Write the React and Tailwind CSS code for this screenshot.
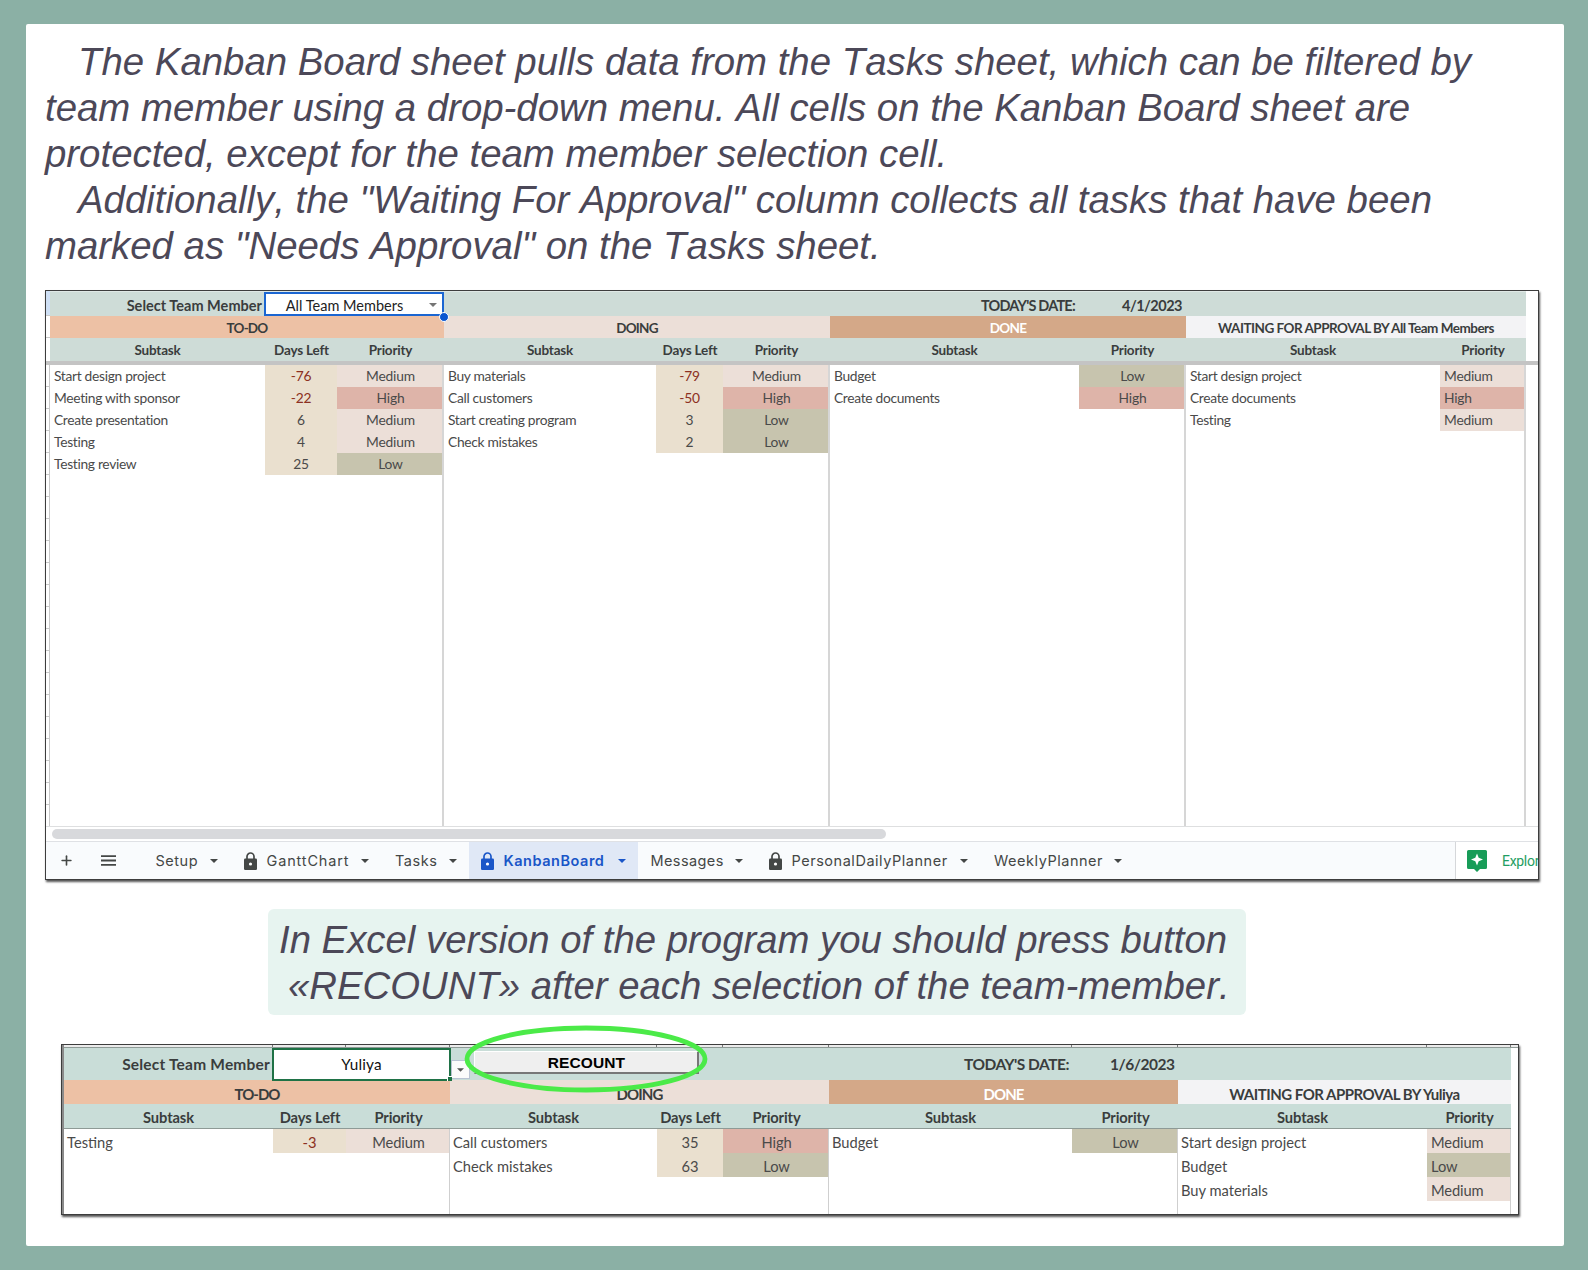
import { Plus } from "lucide-react";

const PRIORITY_COLOURS = {
  Low: "bg-[#c7c4ae]",
  Medium: "bg-[#ecdfd8]",
  High: "bg-[#deb4a9]",
};

const SHEETS_COLUMNS = [
  {
    title: "TO-DO",
    width: "w-[394px]",
    grid: "grid-cols-[215px_72px_105px]",
    titleColour: "bg-[#edc1a5]",
    titleSpacing: "tracking-[-0.8px]",
    hasDays: true,
    tasks: [
      ["Start design project", -76, "Medium"],
      ["Meeting with sponsor", -22, "High"],
      ["Create presentation", 6, "Medium"],
      ["Testing", 4, "Medium"],
      ["Testing review", 25, "Low"],
    ],
  },
  {
    title: "DOING",
    width: "w-[386px]",
    grid: "grid-cols-[212px_67px_105px]",
    titleColour: "bg-[#ecdfd8]",
    titleSpacing: "tracking-[-0.8px]",
    hasDays: true,
    tasks: [
      ["Buy materials", -79, "Medium"],
      ["Call customers", -50, "High"],
      ["Start creating program", 3, "Low"],
      ["Check mistakes", 2, "Low"],
    ],
  },
  {
    title: "DONE",
    width: "w-[356px]",
    grid: "grid-cols-[249px_105px]",
    titleColour: "bg-[#d4a888] text-white",
    titleSpacing: "tracking-[-0.7px]",
    tasks: [
      ["Budget", null, "Low"],
      ["Create documents", null, "High"],
    ],
  },
  {
    title: "WAITING FOR APPROVAL BY All Team Members",
    width: "w-[340px]",
    grid: "grid-cols-[254px_84px]",
    titleColour: "bg-[#f3f3f5]",
    titleSpacing: "tracking-[-0.5px]",
    alignLeft: true,
    tasks: [
      ["Start design project", null, "Medium"],
      ["Create documents", null, "High"],
      ["Testing", null, "Medium"],
    ],
  },
];

const EXCEL_COLUMNS = [
  {
    title: "TO-DO",
    width: "w-[386px]",
    grid: "grid-cols-[209px_73px_103px]",
    titleColour: "bg-[#edc1a5]",
    titleSpacing: "tracking-[-1px]",
    hasDays: true,
    tasks: [["Testing", -3, "Medium"]],
  },
  {
    title: "DOING",
    width: "w-[379px]",
    grid: "grid-cols-[207px_66px_105px]",
    titleColour: "bg-[#ecdfd8]",
    titleSpacing: "tracking-[-0.9px]",
    hasDays: true,
    tasks: [
      ["Call customers", 35, "High"],
      ["Check mistakes", 63, "Low"],
    ],
  },
  {
    title: "DONE",
    width: "w-[349px]",
    grid: "grid-cols-[243px_105px]",
    titleColour: "bg-[#d4a888] text-white",
    titleSpacing: "tracking-[-0.9px]",
    tasks: [["Budget", null, "Low"]],
  },
  {
    title: "WAITING FOR APPROVAL BY Yuliya",
    width: "w-[333px]",
    grid: "grid-cols-[249px_83px]",
    titleColour: "bg-[#f3f3f5]",
    titleSpacing: "tracking-[-0.5px]",
    alignLeft: true,
    tasks: [
      ["Start design project", null, "Medium"],
      ["Budget", null, "Low"],
      ["Buy materials", null, "Medium"],
    ],
  },
];

const TABS = [
  { name: "Setup", style: "w-[87px] pl-[12.5px]" },
  { name: "GanttChart", style: "w-[151px] pl-[13.5px] tracking-[0.85px]", locked: true },
  { name: "Tasks", style: "w-[88px] pl-[14px]" },
  { name: "KanbanBoard", style: "w-[169px] pl-[11.5px]", locked: true, active: true },
  { name: "Messages", style: "w-[117px] pl-[12.5px] tracking-[0.4px]" },
  { name: "PersonalDailyPlanner", style: "w-[225px] pl-[13.5px]", locked: true },
  { name: "WeeklyPlanner", style: "w-[154px] pl-[14px]" },
];

const LockIcon = () => (
  <svg className="mr-[10px] h-[18px] w-[13px] shrink-0" viewBox="0 0 13 18">
    <path d="M3 7V4.5a3.5 3.5 0 0 1 7 0V7" fill="none" stroke="currentColor" strokeWidth="1.7" />
    <rect x="0" y="6.5" width="13" height="11.5" rx="1.2" fill="currentColor" />
    <circle cx="6.5" cy="12" r="1.6" fill="#fff" />
  </svg>
);

const Caret = ({ className }) => (
  <svg className={className} viewBox="0 0 8 4">
    <path d="M0 0h8L4 4z" fill="currentColor" />
  </svg>
);

const SheetListIcon = () => (
  <svg className="ml-[27px] h-[11px] w-[15px]" viewBox="0 0 15 11">
    <path d="M0 1.2h15M0 5.5h15M0 9.8h15" stroke="currentColor" strokeWidth="1.8" />
  </svg>
);

const ExploreIcon = () => (
  <svg className="h-[22px] w-[20px] shrink-0" viewBox="0 0 20 22">
    <path
      d="M1.5 0h17A1.5 1.5 0 0 1 20 1.5v16a1.5 1.5 0 0 1-1.5 1.5H13l-3 3-3-3H1.5A1.5 1.5 0 0 1 0 17.5v-16A1.5 1.5 0 0 1 1.5 0z"
      fill="#189c58"
    />
    <path d="M10 3.5l1.7 4.3L16 9.5l-4.3 1.7L10 15.5l-1.7-4.3L4 9.5l4.3-1.7z" fill="#fff" />
  </svg>
);

const Column = ({ column, sizes }) => {
  const { title, width, grid, titleColour, titleSpacing, hasDays, alignLeft, tasks } = column;
  return (
    <div className={`flex shrink-0 flex-col ${width}`}>
      <div className={`flex items-center justify-center font-bold whitespace-nowrap ${sizes.title} ${titleColour} ${titleSpacing}`}>
        {title}
      </div>
      <div className={`grid items-center text-center font-bold whitespace-nowrap ${sizes.head} ${grid}`}>
        <span>Subtask</span>
        {hasDays && <span className="pl-px">Days Left</span>}
        <span className="pl-[2px]">Priority</span>
      </div>
      <div className={`flex-1 ${sizes.line}`}>
        {tasks.map(([name, days, priority], index) => (
          <div className={`grid text-center text-[#4a4a4a] ${grid} ${sizes.row}`} key={index}>
            <span className={`text-left ${sizes.name}`}>{name}</span>
            {hasDays && (
              <span className={`bg-[#eae0cf] ${sizes.cell} ${days < 0 ? "text-[#8c3022]" : ""}`}>{days}</span>
            )}
            <span className={`${PRIORITY_COLOURS[priority]} ${sizes.cell} ${alignLeft ? "pl-1 text-left" : "pl-[2px]"}`}>
              {priority}
            </span>
          </div>
        ))}
      </div>
    </div>
  );
};

const SheetsBoard = () => {
  const sizes = {
    title: "h-[22px] pt-[2px] text-[13.5px]",
    head: "h-[27px] border-b-4 border-[#c4c4c4] bg-[#cedcd7] pt-[2px] text-[13.5px]",
    line: "border-r-2 border-[#d6d6d6]",
    row: "h-[22px] leading-[22px]",
    name: "pl-[4px] tracking-[-0.31px]",
    cell: "",
  };
  return (
    <div className="ml-[19px] flex h-[590px] w-[1494px] flex-col overflow-hidden border border-[#3d3d3d] bg-white shadow-[1px_2px_2px_#555] font-[Lato,sans-serif] text-[13.8px] tracking-[-0.2px] text-[#3a3d3d]">
      <div className="flex h-[535px] shrink-0">
        <div className="flex w-[4px] shrink-0 flex-col bg-white">
          <div className="h-[25px] shrink-0 border-b border-[#c9c9c9] bg-[#cfe0f5]" />
          <div className="h-[22px] shrink-0 border-b border-[#c9c9c9]" />
          <div className="h-[27px] shrink-0 border-b-4 border-[#c4c4c4]" />
          {Array.from({ length: 21 }, (_, i) => (
            <div className="h-[22px] shrink-0 border-r border-b border-[#c9c9c9]" key={i} />
          ))}
        </div>
        <div className="flex w-[1476px] shrink-0 flex-col">
          <div className="flex h-[25px] shrink-0 items-stretch border-t border-[#dfe8e5] bg-[#cedcd7] text-[14.5px] leading-[27px] tracking-[0.02px] whitespace-nowrap">
            <div className="w-[212px] text-right font-bold">Select Team Member</div>
            <div className="relative ml-[2px] flex w-[180px] items-center justify-center border-2 border-[#1b66d2] bg-white pt-[2px] pr-[19px] text-[#222]">
              All Team Members
              <Caret className="absolute top-[9px] right-[5px] h-[4px] w-[8px] text-[#757575]" />
              <span className="absolute -right-[7px] -bottom-[8px] size-[10px] rounded-full border border-white bg-[#0b57d0]" />
            </div>
            <div className="ml-[537px] w-[95px] font-bold tracking-[-0.8px]">TODAY'S DATE:</div>
            <div className="ml-[46px] w-[62px] font-bold tracking-[-0.5px]">4/1/2023</div>
          </div>
          <div className="flex flex-1">
            {SHEETS_COLUMNS.map((column) => (
              <Column column={column} sizes={sizes} key={column.title} />
            ))}
          </div>
        </div>
        <div className="flex-1">
          <div className="h-[74px] border-b-4 border-[#c4c4c4]" />
        </div>
      </div>
      <div className="flex h-[15px] shrink-0 items-center border-t border-[#dedfe0] pl-[6px]">
        <div className="h-[10px] w-[834px] rounded-full bg-[#d8d9dc]" />
      </div>
      <div className="flex flex-1 items-stretch border-t border-[#dfe1e5] bg-[#f9fbfd] font-[Inter,sans-serif] text-[14.5px] tracking-[0.53px] text-[#444746]">
        <div className="flex w-[97px] items-center pl-[13px]">
          <Plus size={15} strokeWidth={2.6} />
          <SheetListIcon />
        </div>
        {TABS.map(({ name, style, locked, active }) => (
          <div
            className={`flex shrink-0 items-center pt-px pr-[12px] ${style} ${
              active ? "bg-[#e0e8f6] font-semibold text-[#1a56c8]" : ""
            }`}
            key={name}>
            {locked && <LockIcon />}
            {name}
            <Caret className="ml-auto h-[4px] w-[8px]" />
          </div>
        ))}
        <div className="ml-auto flex w-[83px] shrink-0 items-center overflow-hidden border-l border-[#d5d7da] bg-white pl-[11px] font-[Roboto,sans-serif] text-[14px] tracking-[-0.3px] text-[#1f9e63]">
          <ExploreIcon />
          <span className="mt-px ml-[15px]">Explore</span>
        </div>
      </div>
    </div>
  );
};

const ExcelBoard = () => {
  const sizes = {
    title: "h-[24px] pt-[4px] text-[15px]",
    head: "h-[25px] border-b border-[#8e9a96] bg-[#c9ddd8] pt-[2px] text-[14.7px] leading-[22px]",
    line: "border-r border-[#cfcfcf]",
    row: "h-[24px] leading-[22px]",
    name: "pt-[2px] pl-[3px] tracking-[0px]",
    cell: "pt-[2px]",
  };
  return (
    <div className="relative mt-[29px] ml-[35px] h-[171px] w-[1458px] border border-[#3d3d3d] bg-white shadow-[1px_2px_2px_#555] font-[Lato,sans-serif] text-[14.7px] tracking-[-0.1px] text-[#3a3d3d]">
      <div className="flex h-full flex-col overflow-hidden border-l-2 border-[#8a8a8a]">
        <div className="flex h-[3px] shrink-0 border-b border-[#8e9a96] bg-[#ececec]">
          <div className="w-[209px] border-r border-[#777]" />
          <div className="w-[73px] border-r border-[#777]" />
          <div className="w-[104px] border-r border-[#777]" />
          <div className="w-[207px] border-r border-[#777]" />
          <div className="w-[66px] border-r border-[#777]" />
          <div className="w-[106px] border-r border-[#777]" />
          <div className="w-[243px] border-r border-[#777]" />
          <div className="w-[106px] border-r border-[#777]" />
          <div className="w-[249px] border-r border-[#777]" />
          <div className="w-[84px] border-r border-[#777]" />
        </div>
        <div className="flex h-[32px] w-[1447px] shrink-0 bg-[#c9ddd8] text-[15.5px] leading-[33px] tracking-[0.2px] whitespace-nowrap">
          <div className="w-[206px] text-right font-bold">Select Team Member</div>
          <div className="relative ml-[2px] flex h-[33px] w-[179px] items-center justify-center border-2 border-[#1f7246] bg-white pb-px text-[15.3px] text-[#111]">
            Yuliya
            <span className="absolute -right-[3px] -bottom-[2px] size-[5px] border-t border-l border-white bg-[#1f7246]" />
          </div>
          <div className="mt-[12px] flex h-[19px] w-[19px] items-center justify-center border border-[#b9c3d3] bg-[#fbfbfb]">
            <Caret className="h-[4px] w-[7px] text-[#555]" />
          </div>
          <button className="mt-[3px] ml-[4px] h-[23px] w-[225px] border-t border-r-2 border-b-2 border-l border-t-white border-r-[#777] border-b-[#777] border-l-white bg-[#efefef] pt-[2px] pl-px font-['Liberation_Sans',sans-serif] text-[15.5px] leading-[18px] font-bold tracking-[0.1px] text-black">
            RECOUNT
          </button>
          <div className="ml-[265px] w-[106px] font-bold tracking-[-0.5px]">TODAY'S DATE:</div>
          <div className="ml-[40px] w-[66px] font-bold tracking-[-0.5px]">1/6/2023</div>
        </div>
        <div className="flex w-[1447px] flex-1">
          {EXCEL_COLUMNS.map((column) => (
            <Column column={column} sizes={sizes} key={column.title} />
          ))}
        </div>
      </div>
      {/* marker ring around the recount button */}
      <svg className="absolute -top-[20px] left-[402px] h-[68px] w-[244px]" viewBox="0 0 244 68">
        <ellipse cx="122" cy="34" rx="119" ry="31" fill="none" stroke="#4bea48" strokeWidth="4.8" />
      </svg>
    </div>
  );
};

export default function App() {
  return (
    <div className="h-[1270px] w-[1588px] bg-[#8bb0a5] pt-[24px] pl-[26px]">
      <div className="h-[1222px] w-[1538px] rounded-[2px] bg-white pt-[15px] font-['Liberation_Sans',Arial,sans-serif] text-[#4c4858]">
        <div className="mb-[21px] h-[230px] pl-[19px] text-[38.38px] leading-[46px] whitespace-pre italic [font-kerning:none]">
          <p className="pl-[33px]">The Kanban Board sheet pulls data from the Tasks sheet, which can be filtered by</p>
          <p>team member using a drop-down menu. All cells on the Kanban Board sheet are</p>
          <p>protected, except for the team member selection cell.</p>
          <p className="pl-[33px]">Additionally, the "Waiting For Approval" column collects all tasks that have been</p>
          <p>marked as "Needs Approval" on the Tasks sheet.</p>
        </div>
        <SheetsBoard />
        <div className="mt-[29px] ml-[242px] h-[106px] w-[978px] rounded-md bg-[#e7f4f0] pt-[8px] pl-[11px] text-[38.35px] leading-[46px] whitespace-pre italic [font-kerning:none]">
          <p>In Excel version of the program you should press button</p>
          <p className="pl-[9px]">«RECOUNT» after each selection of the team-member.</p>
        </div>
        <ExcelBoard />
      </div>
    </div>
  );
}
